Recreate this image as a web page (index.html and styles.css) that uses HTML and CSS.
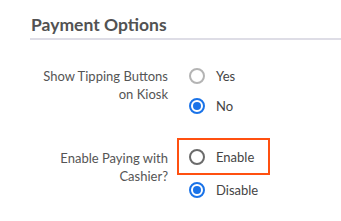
FILE: index.html
```html
<!DOCTYPE html>
<html>
<head>
  <link rel="stylesheet" href="styles.css">
</head>
<body>
  <div class="settings">
    <h2 class="section-title">Payment Options</h2>

    <div class="field field-tipping">
      <div class="field-label">Show Tipping Buttons on Kiosk</div>
      <div class="field-options">
        <label class="option">
          <span class="radio"></span>
          <span class="option-text">Yes</span>
        </label>
        <label class="option">
          <span class="radio checked"></span>
          <span class="option-text">No</span>
        </label>
      </div>
    </div>

    <div class="field field-cashier">
      <div class="field-label">Enable Paying with Cashier?</div>
      <div class="field-options">
        <label class="option highlight">
          <span class="radio hover"></span>
          <span class="option-text">Enable</span>
        </label>
        <label class="option">
          <span class="radio checked"></span>
          <span class="option-text">Disable</span>
        </label>
      </div>
    </div>
  </div>
</body>
</html>
```

FILE: styles.css
```css
* {
  margin: 0;
  padding: 0;
  box-sizing: border-box;
}

body {
  font-family: Lato, "Liberation Sans", sans-serif;
  background: #fff;
  color: #555;
}

.settings {
  padding: 13px 0 0 30px;
}

.section-title {
  font-size: 17.5px;
  font-weight: 700;
  color: #525252;
  line-height: 23px;
  padding-left: 1px;
  padding-bottom: 2px;
  border-bottom: 2px solid #dedde6;
}

.field {
  display: grid;
  grid-template-columns: 138px 1fr;
  column-gap: 21px;
}

.field-tipping {
  margin-top: 21px;
}

.field-cashier {
  margin-top: 18px;
}

.field-label {
  font-size: 13px;
  line-height: 18px;
  text-align: right;
  color: #555;
  padding-top: 6px;
}

.field-cashier .field-label {
  padding-top: 10px;
}

.field-options {
  display: flex;
  flex-direction: column;
}

.option {
  display: flex;
  align-items: center;
  gap: 11px;
  height: 30px;
  font-size: 13px;
  color: #444;
}

.option.highlight {
  height: 37px;
  margin-left: -12px;
  margin-top: -1px;
  width: 93px;
  padding-left: 10px;
  border: 2px solid #ff5010;
}

.radio {
  width: 16px;
  height: 16px;
  border: 2px solid #b4b4b4;
  border-radius: 50%;
  position: relative;
  flex: none;
}

.radio.hover {
  border-color: #6b6b6b;
}

.radio.checked {
  border-color: #1a73e8;
}

.radio.checked::after {
  content: '';
  position: absolute;
  top: 2px;
  left: 2px;
  width: 8px;
  height: 8px;
  border-radius: 50%;
  background: #1a73e8;
}
```
